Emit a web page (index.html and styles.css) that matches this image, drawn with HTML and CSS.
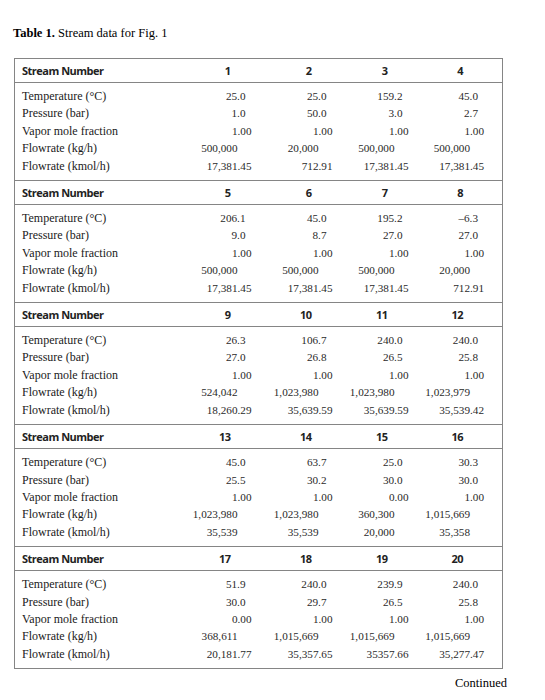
FILE: index.html
```html
<!DOCTYPE html>
<html lang="en">
<head>
  <meta charset="UTF-8" />
  <meta name="viewport" content="width=device-width, initial-scale=1.0"/>
  <title>Table 1 - Stream data</title>
  <link rel="stylesheet" href="styles.css">
</head>
<body>
  <div class="page">
    <p class="caption"><b>Table 1.</b> Stream data for Fig. 1</p>

    <table class="streams">
      <colgroup>
        <col class="c-label">
        <col class="c1">
        <col class="c2">
        <col class="c3">
        <col class="c4">
      </colgroup>

      <tbody>
        <tr class="head"><th>Stream Number</th><th class="n">1</th><th class="n">2</th><th class="n">3</th><th class="n">4</th></tr>
        <tr class="d1 first"><td>Temperature (°C)</td><td class="v">25.0</td><td class="v">25.0</td><td class="v">159.2</td><td class="v">45.0</td></tr>
        <tr class="d1"><td>Pressure (bar)</td><td class="v">1.0</td><td class="v">50.0</td><td class="v">3.0</td><td class="v">2.7</td></tr>
        <tr><td>Vapor mole fraction</td><td class="v">1.00</td><td class="v">1.00</td><td class="v">1.00</td><td class="v">1.00</td></tr>
        <tr class="int"><td>Flowrate (kg/h)</td><td class="v">500,000</td><td class="v">20,000</td><td class="v">500,000</td><td class="v">500,000</td></tr>
        <tr class="last"><td>Flowrate (kmol/h)</td><td class="v">17,381.45</td><td class="v">712.91</td><td class="v">17,381.45</td><td class="v">17,381.45</td></tr>
      </tbody>

      <tbody>
        <tr class="head"><th>Stream Number</th><th class="n">5</th><th class="n">6</th><th class="n">7</th><th class="n">8</th></tr>
        <tr class="d1 first"><td>Temperature (°C)</td><td class="v">206.1</td><td class="v">45.0</td><td class="v">195.2</td><td class="v">&ndash;6.3</td></tr>
        <tr class="d1"><td>Pressure (bar)</td><td class="v">9.0</td><td class="v">8.7</td><td class="v">27.0</td><td class="v">27.0</td></tr>
        <tr><td>Vapor mole fraction</td><td class="v">1.00</td><td class="v">1.00</td><td class="v">1.00</td><td class="v">1.00</td></tr>
        <tr class="int"><td>Flowrate (kg/h)</td><td class="v">500,000</td><td class="v">500,000</td><td class="v">500,000</td><td class="v">20,000</td></tr>
        <tr class="last"><td>Flowrate (kmol/h)</td><td class="v">17,381.45</td><td class="v">17,381.45</td><td class="v">17,381.45</td><td class="v">712.91</td></tr>
      </tbody>

      <tbody>
        <tr class="head"><th>Stream Number</th><th class="n">9</th><th class="n">10</th><th class="n">11</th><th class="n">12</th></tr>
        <tr class="d1 first"><td>Temperature (°C)</td><td class="v">26.3</td><td class="v">106.7</td><td class="v">240.0</td><td class="v">240.0</td></tr>
        <tr class="d1"><td>Pressure (bar)</td><td class="v">27.0</td><td class="v">26.8</td><td class="v">26.5</td><td class="v">25.8</td></tr>
        <tr><td>Vapor mole fraction</td><td class="v">1.00</td><td class="v">1.00</td><td class="v">1.00</td><td class="v">1.00</td></tr>
        <tr class="int"><td>Flowrate (kg/h)</td><td class="v">524,042</td><td class="v">1,023,980</td><td class="v">1,023,980</td><td class="v">1,023,979</td></tr>
        <tr class="last"><td>Flowrate (kmol/h)</td><td class="v">18,260.29</td><td class="v">35,639.59</td><td class="v">35,639.59</td><td class="v">35,539.42</td></tr>
      </tbody>

      <tbody>
        <tr class="head"><th>Stream Number</th><th class="n">13</th><th class="n">14</th><th class="n">15</th><th class="n">16</th></tr>
        <tr class="d1 first"><td>Temperature (°C)</td><td class="v">45.0</td><td class="v">63.7</td><td class="v">25.0</td><td class="v">30.3</td></tr>
        <tr class="d1"><td>Pressure (bar)</td><td class="v">25.5</td><td class="v">30.2</td><td class="v">30.0</td><td class="v">30.0</td></tr>
        <tr><td>Vapor mole fraction</td><td class="v">1.00</td><td class="v">1.00</td><td class="v">0.00</td><td class="v">1.00</td></tr>
        <tr class="int"><td>Flowrate (kg/h)</td><td class="v">1,023,980</td><td class="v">1,023,980</td><td class="v">360,300</td><td class="v">1,015,669</td></tr>
        <tr class="int last"><td>Flowrate (kmol/h)</td><td class="v">35,539</td><td class="v">35,539</td><td class="v">20,000</td><td class="v">35,358</td></tr>
      </tbody>

      <tbody>
        <tr class="head"><th>Stream Number</th><th class="n">17</th><th class="n">18</th><th class="n">19</th><th class="n">20</th></tr>
        <tr class="d1 first"><td>Temperature (°C)</td><td class="v">51.9</td><td class="v">240.0</td><td class="v">239.9</td><td class="v">240.0</td></tr>
        <tr class="d1"><td>Pressure (bar)</td><td class="v">30.0</td><td class="v">29.7</td><td class="v">26.5</td><td class="v">25.8</td></tr>
        <tr><td>Vapor mole fraction</td><td class="v">0.00</td><td class="v">1.00</td><td class="v">1.00</td><td class="v">1.00</td></tr>
        <tr class="int"><td>Flowrate (kg/h)</td><td class="v">368,611</td><td class="v">1,015,669</td><td class="v">1,015,669</td><td class="v">1,015,669</td></tr>
        <tr class="last"><td>Flowrate (kmol/h)</td><td class="v">20,181.77</td><td class="v">35,357.65</td><td class="v">35357.66</td><td class="v">35,277.47</td></tr>
      </tbody>
    </table>

    <p class="continued">Continued</p>
  </div>
</body>
</html>
```

FILE: styles.css
```css
body {
  margin: 0;
  background: #fff;
  color: #111;
  font-family: "Liberation Serif", "Times New Roman", serif;
}
.page {
  padding: 26px 38px 0 14px;
}
.caption {
  margin: 0 0 17px -1px;
  font-size: 12.5px;
  line-height: 15px;
  color: #000;
}

/* table frame */
.streams {
  width: 488px;
  border-collapse: collapse;
  table-layout: fixed;
  border: 1px solid #858585;
}
.c-label { width: 160px; }
.c1 { width: 80px; }
.c2 { width: 81px; }
.c3 { width: 76px; }
.c4 { width: 91px; }

/* header rows */
tr.head {
  border-top: 1px solid #858585;
  border-bottom: 1px solid #858585;
}
tr.head th {
  height: 23px;
  padding: 0;
  font-family: "Open Sans", "Liberation Sans", sans-serif;
  font-weight: 700;
  font-size: 11px;
  letter-spacing: -0.5px;
  color: #222;
  text-align: right;
}
tr.head th:first-child {
  text-align: left;
  padding-left: 7px;
}
tr.head th.n { padding-right: 24px; }
tr.head th.n:last-child { padding-right: 39px; }

/* data rows */
.streams td {
  padding: 0;
  line-height: 17.4px;
  font-size: 12px;
  color: #1a1a1a;
  white-space: nowrap;
}
.streams td:first-child { padding-left: 7px; }
.streams tr.first td { padding-top: 5px; }
.streams tr.last td { padding-bottom: 5px; }

td.v {
  text-align: right;
  font-size: 11.2px;
  color: #2a2a2a;
  padding-right: 3px;
}
td.v:last-child { padding-right: 18px; }
tr.d1 td.v { padding-right: 9px; }
tr.d1 td.v:last-child { padding-right: 24px; }
tr.int td.v { padding-right: 17px; }
tr.int td.v:last-child { padding-right: 32px; }

.continued {
  margin: 7px 0 0;
  text-align: right;
  font-size: 12.5px;
  line-height: 15px;
  color: #000;
}
```
